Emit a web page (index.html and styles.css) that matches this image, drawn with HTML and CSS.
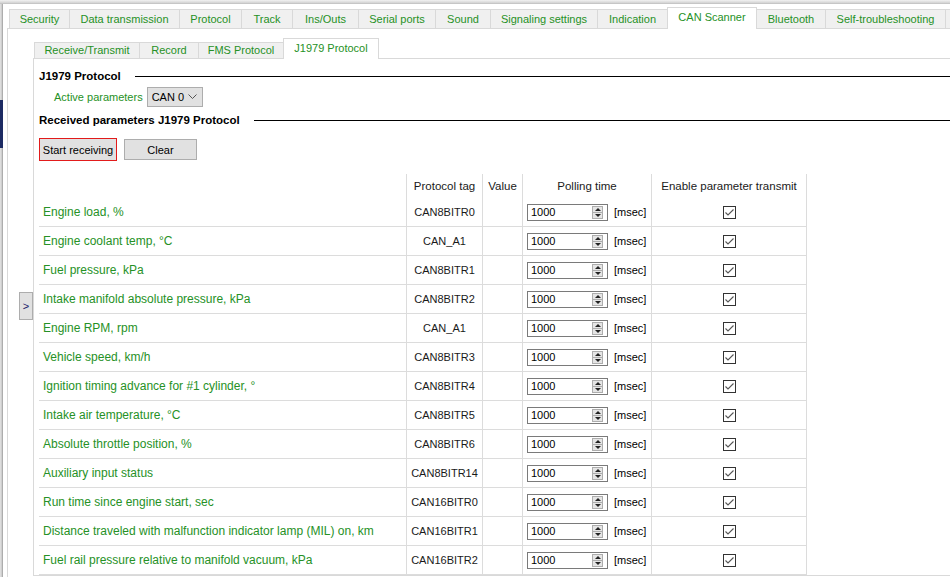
FILE: index.html
```html
<!DOCTYPE html>
<html lang="en">

<head>
    <meta charset="UTF-8">
    <meta name="viewport" content="width=device-width, initial-scale=1.0">
    <title>CAN Scanner - J1979 Protocol</title>
    <link rel="stylesheet" href="styles.css">
</head>

<body>
    <div class="topband"></div>
    <div class="screen">
        <div class="edge"><div class="edge-mark"></div></div>
        <div class="app">
            <ul class="tabs main-tabs">
                <li>Security</li>
                <li>Data transmission</li>
                <li>Protocol</li>
                <li>Track</li>
                <li>Ins/Outs</li>
                <li>Serial ports</li>
                <li>Sound</li>
                <li>Signaling settings</li>
                <li>Indication</li>
                <li class="active">CAN Scanner</li>
                <li>Bluetooth</li>
                <li>Self-troubleshooting</li>
                <li></li>
            </ul>
            <div class="pane outer">
                <div class="gutter">
                    <button class="expand">&gt;</button>
                </div>
                <div class="inner">
                    <ul class="tabs sub-tabs">
                        <li>Receive/Transmit</li>
                        <li>Record</li>
                        <li>FMS Protocol</li>
                        <li class="active">J1979 Protocol</li>
                    </ul>
                    <div class="pane sub">
                        <div class="group-title">J1979 Protocol</div>
                        <div class="field-row">
                            <span class="label">Active parameters</span>
                            <div class="select">
                                <span>CAN 0</span>
                                <svg width="9" height="6" viewBox="0 0 9 6"><polyline points="0.5,0.5 4.5,4.5 8.5,0.5" fill="none" stroke="#555" stroke-width="1"/></svg>
                            </div>
                        </div>
                        <div class="group-title">Received parameters J1979 Protocol</div>
                        <div class="buttons">
                            <button class="btn focused">Start receiving</button>
                            <button class="btn">Clear</button>
                        </div>

                        <table class="params">
                            <thead>
                                <tr>
                                    <th class="c-name"></th>
                                    <th class="c-tag">Protocol tag</th>
                                    <th class="c-value">Value</th>
                                    <th class="c-poll">Polling time</th>
                                    <th class="c-enable">Enable parameter transmit</th>
                                </tr>
                            </thead>
                            <tbody id="rows"></tbody>
                        </table>
                    </div>
                </div>
            </div>
        </div>
    </div>
    <script>
        var params = [
            ['Engine load, %', 'CAN8BITR0'],
            ['Engine coolant temp, °C', 'CAN_A1'],
            ['Fuel pressure, kPa', 'CAN8BITR1'],
            ['Intake manifold absolute pressure, kPa', 'CAN8BITR2'],
            ['Engine RPM, rpm', 'CAN_A1'],
            ['Vehicle speed, km/h', 'CAN8BITR3'],
            ['Ignition timing advance for #1 cylinder, °', 'CAN8BITR4'],
            ['Intake air temperature, °C', 'CAN8BITR5'],
            ['Absolute throttle position, %', 'CAN8BITR6'],
            ['Auxiliary input status', 'CAN8BITR14'],
            ['Run time since engine start, sec', 'CAN16BITR0'],
            ['Distance traveled with malfunction indicator lamp (MIL) on, km', 'CAN16BITR1'],
            ['Fuel rail pressure relative to manifold vacuum, kPa', 'CAN16BITR2']
        ];

        var oRows = document.getElementById('rows');
        var html = '';

        params.forEach(function (p) {
            html += '<tr>' +
                '<td class="c-name">' + p[0] + '</td>' +
                '<td class="c-tag">' + p[1] + '</td>' +
                '<td class="c-value"></td>' +
                '<td class="c-poll"><div class="poll">' +
                    '<div class="spin"><span class="spin-val">1000</span>' +
                    '<span class="spin-btns"><i class="up"></i><i class="down"></i></span></div>' +
                    '<span class="unit">[msec]</span></div></td>' +
                '<td class="c-enable"><svg class="check" width="13" height="13" viewBox="0 0 13 13">' +
                    '<rect x="0.5" y="0.5" width="12" height="12" fill="#fff" stroke="#333"/>' +
                    '<polyline points="2.5,6.5 5,9 10.5,3.5" fill="none" stroke="#555" stroke-width="1.1"/></svg></td>' +
                '</tr>';
        });

        oRows.innerHTML = html;
    </script>
</body>

</html>
```

FILE: styles.css
```css
* {
    margin: 0;
    padding: 0;
    box-sizing: border-box;
}

body {
    width: 950px;
    height: 577px;
    overflow: hidden;
    background: #fff;
    font-family: "Liberation Sans", Arial, sans-serif;
    font-size: 11.5px;
    color: #1a1a1a;
}

.topband {
    height: 4px;
    background: linear-gradient(#f2f2f2, #d4d4d4 70%, #bcbcbc);
}

.screen {
    display: flex;
    height: 573px;
}

/* splitter strip on the far left */
.edge {
    flex: 0 0 3px;
    background: linear-gradient(to right, #e4e4e4, #cfcfcf 50%, #9c9c9c);
    padding-top: 96px;
}

.edge-mark {
    height: 48px;
    background: #1d2b63;
}

.app {
    flex: 0 0 1000px;
    margin-left: 4px;
    display: flex;
    flex-direction: column;
}

/* tabs */
.tabs {
    list-style: none;
    display: flex;
    align-items: flex-end;
    white-space: nowrap;
    font-size: 11px;
}

.tabs li {
    border: 1px solid #d9d9d9;
    border-bottom: none;
    background: #f0f0f0;
    color: #269126;
    margin-left: -1px;
    text-align: center;
    overflow: hidden;
}

.tabs li.active {
    position: relative;
    background: #fff;
    margin-bottom: -1px;
}

.main-tabs {
    margin-top: 3px;
    padding-left: 3px;
}

.main-tabs li {
    height: 19px;
    line-height: 18px;
}

.main-tabs li.active {
    height: 22px;
    line-height: 19px;
}

/* tab widths as in the original dialog */
.main-tabs li:nth-child(1) { width: 61px; }
.main-tabs li:nth-child(2) { width: 111px; }
.main-tabs li:nth-child(3) { width: 63px; }
.main-tabs li:nth-child(4) { width: 52px; }
.main-tabs li:nth-child(5) { width: 67px; }
.main-tabs li:nth-child(6) { width: 78px; }
.main-tabs li:nth-child(7) { width: 56px; }
.main-tabs li:nth-child(8) { width: 108px; }
.main-tabs li:nth-child(9) { width: 71px; }
.main-tabs li:nth-child(10) { width: 90px; }
.main-tabs li:nth-child(11) { width: 70px; }
.main-tabs li:nth-child(12) { width: 121px; }
.main-tabs li:nth-child(13) { width: 40px; }

.sub-tabs {
    margin-top: 9px;
    padding-left: 2px;
}

.sub-tabs li {
    height: 16px;
    line-height: 15px;
}

.sub-tabs li.active {
    height: 21px;
    line-height: 19px;
}

.sub-tabs li:nth-child(1) { width: 106px; }
.sub-tabs li:nth-child(2) { width: 60px; }
.sub-tabs li:nth-child(3) { width: 86px; }
.sub-tabs li:nth-child(4) { width: 96px; }

/* panes */
.pane {
    border: 1px solid #d9d9d9;
    background: #fff;
}

.outer {
    flex: 1;
    display: flex;
    padding-bottom: 1px;
}

.gutter {
    flex: 0 0 25px;
    padding: 263px 0 0 11px;
}

.expand {
    display: block;
    width: 14px;
    height: 28px;
    background: #e1e1e1;
    border: 1px solid #adadad;
    font-family: "Liberation Sans", Arial, sans-serif;
    font-size: 11px;
    color: #1a1a6a;
}

.inner {
    flex: 1;
    display: flex;
    flex-direction: column;
}

.sub {
    flex: 1;
    padding: 9px 0 0 5px;
}

.group-title {
    display: flex;
    align-items: center;
    gap: 14px;
    height: 16px;
    font-weight: bold;
    color: #000;
}

.group-title::after {
    content: "";
    flex: 1;
    border-top: 1px solid #000;
}

.field-row {
    display: flex;
    align-items: center;
    gap: 4px;
    margin: 3px 0 5px 15px;
    font-size: 11px;
}

.label {
    color: #269126;
}

.select {
    display: flex;
    align-items: center;
    justify-content: space-between;
    width: 56px;
    height: 20px;
    padding: 0 5px 0 4px;
    background: #e1e1e1;
    border: 1px solid #adadad;
    color: #000;
}

.buttons {
    display: flex;
    align-items: center;
    gap: 6px;
    margin-top: 10px;
}

.btn {
    height: 21px;
    background: #e1e1e1;
    border: 1px solid #adadad;
    font-family: inherit;
    font-size: 11px;
    color: #000;
}

.btn.focused {
    width: 78px;
    height: 23px;
    border-color: #e21b1b;
}

.btn:not(.focused) {
    width: 73px;
    margin-left: 1px;
}

/* parameters table */
.params {
    margin-top: 13px;
    border-collapse: separate;
    border-spacing: 0;
    font-size: 11px;
}

.params th,
.params td {
    border-right: 1px solid #dcdcdc;
    padding: 0;
    vertical-align: middle;
}

.params th {
    font-weight: normal;
    font-size: 11.5px;
    color: #1a1a1a;
    text-align: center;
}

.params thead tr {
    height: 24px;
}

.params tbody tr {
    height: 29px;
}

.params td {
    border-bottom: 1px solid #dcdcdc;
}

.c-name {
    width: 368px;
    text-align: left;
}

td.c-name {
    padding-left: 4px;
    font-size: 12px;
    color: #269126;
}

.c-tag {
    width: 76px;
    text-align: center;
}

.c-value {
    width: 40px;
}

.c-poll {
    width: 129px;
}

.c-enable {
    width: 155px;
    text-align: center;
}

.poll {
    display: flex;
    align-items: center;
    gap: 6px;
    padding-left: 4px;
}

.spin {
    display: flex;
    align-items: center;
    justify-content: space-between;
    width: 81px;
    height: 17px;
    padding: 0 4px 0 3px;
    border: 1px solid #7a7a7a;
    color: #000;
}

.spin-btns {
    display: flex;
    flex-direction: column;
    width: 11px;
    height: 13px;
    border: 1px solid #adadad;
    background: #e5e5e5;
}

.spin-btns i {
    flex: 1;
    display: flex;
    align-items: center;
    justify-content: center;
}

.spin-btns i + i {
    border-top: 1px solid #adadad;
}

.spin-btns i::before {
    content: "";
    border-left: 3px solid transparent;
    border-right: 3px solid transparent;
}

.spin-btns .up::before {
    border-bottom: 3px solid #222;
}

.spin-btns .down::before {
    border-top: 3px solid #222;
}

.unit {
    color: #000;
}

.check {
    display: block;
    margin: 0 auto;
}
```
